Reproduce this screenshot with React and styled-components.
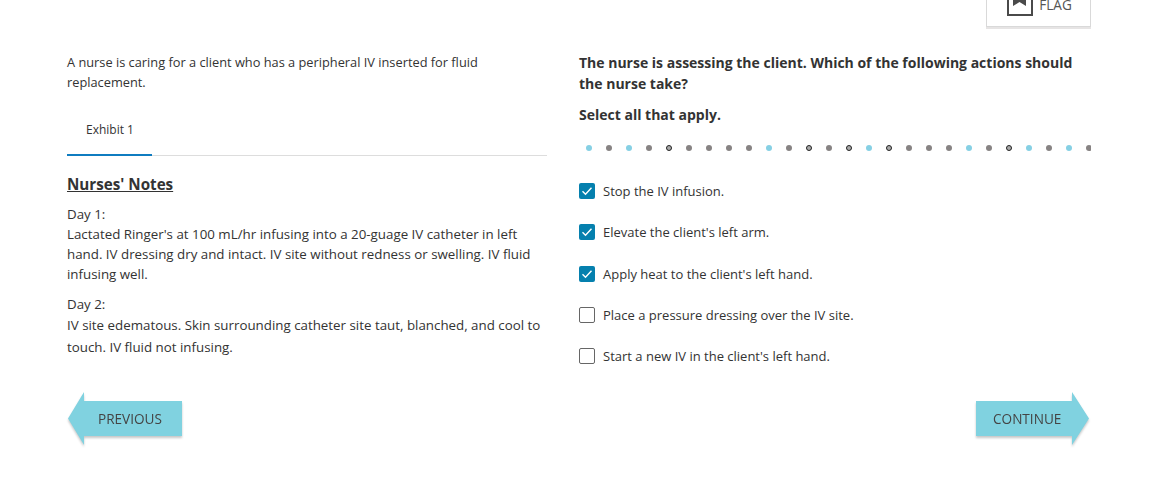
import React from "react";
import styled, { createGlobalStyle } from "styled-components";

const GlobalStyle = createGlobalStyle`
  html, body {
    margin: 0;
    padding: 0;
    background: #fff;
    overflow: hidden;
  }
  body {
    font-family: "Open Sans", "Liberation Sans", sans-serif;
    color: #333;
  }
`;

const Page = styled.div`
  width: 1157px;
  height: 479px;
  overflow: hidden;
`;

const TopBar = styled.div`
  height: 29px;
  padding-right: 66px;
  display: flex;
  justify-content: flex-end;
  align-items: flex-end;
  overflow: hidden;
`;

const FlagButton = styled.div`
  width: 105px;
  height: 40px;
  box-sizing: border-box;
  border: 1px solid #d9d9d9;
  box-shadow: 0 2px 0 #e6e4e4;
  margin-bottom: 2px;
  display: flex;
  align-items: flex-end;
  justify-content: center;
  gap: 6px;
  padding: 0 0 10px 2px;
  color: #555;
  font-size: 13.6px;
  line-height: 14px;
  span {
    margin-bottom: 4px;
  }
`;

const Columns = styled.div`
  display: grid;
  grid-template-columns: 480px 512px;
  column-gap: 32px;
  padding: 0 66px 0 67px;
  margin-top: 14px;
  height: 349px;
`;

const Stem = styled.p`
  margin: 9px 0 0;
  font-size: 12.8px;
  line-height: 20px;
`;

const Tabs = styled.div`
  display: flex;
  height: 46px;
  margin-top: 18px;
  box-sizing: border-box;
  border-bottom: 1px solid #ddd;
`;

const Tab = styled.div`
  width: 85px;
  height: 46px;
  box-sizing: border-box;
  border-bottom: 2px solid #0f7cc0;
  padding: 10px 0 0 19px;
  font-size: 12px;
  line-height: 20px;
`;

const NotesTitle = styled.h2`
  margin: 17px 0 0;
  font-size: 15.2px;
  line-height: 22px;
  font-weight: 700;
  text-decoration: underline;
`;

const Note = styled.p`
  margin: ${(p) => p.$top}px 0 0;
  font-size: 13.33px;
  line-height: ${(p) => p.$leading}px;
`;

const Question = styled.p`
  margin: 9px 0 0;
  font-size: 14px;
  line-height: 21px;
  font-weight: 700;
`;

const Hint = styled.p`
  margin: 10px 0 0;
  font-size: 14px;
  line-height: 21px;
  font-weight: 700;
`;

const DotRow = styled.div`
  display: flex;
  gap: 14px;
  margin: 20px 0 0 7px;
  height: 6px;
  width: 505px;
  overflow: hidden;
`;

const Dot = styled.span`
  flex: none;
  width: 6px;
  height: 6px;
  box-sizing: border-box;
  border-radius: 50%;
  background: ${(p) => (p.$kind === "blue" ? "#86d0e4" : p.$kind === "ring" ? "#a8a8a8" : "#878383")};
  border: ${(p) => (p.$kind === "ring" ? "1px solid #222" : "none")};
`;

const Options = styled.div`
  display: flex;
  flex-direction: column;
  margin-top: 19.7px;
`;

const Option = styled.label`
  display: flex;
  align-items: center;
  gap: 8px;
  height: 41.2px;
  font-size: 13px;
`;

const Box = styled.span`
  flex: none;
  width: 16px;
  height: 16px;
  box-sizing: border-box;
  border-radius: 2px;
  display: flex;
  align-items: center;
  justify-content: center;
  background: ${(p) => (p.$checked ? "#0580ae" : "#fff")};
  border: ${(p) => (p.$checked ? "none" : "1.5px solid #666")};
`;

const NavRow = styled.div`
  display: flex;
  justify-content: space-between;
  padding: 0 68px;
`;

const NavShadow = styled.div`
  filter: drop-shadow(0 2px 1px rgba(0, 0, 0, 0.22));
`;

const NavButton = styled.div`
  width: ${(p) => (p.$back ? "114px" : "113px")};
  height: 53px;
  background: #80d2e0;
  color: #444;
  font-size: 13.6px;
  font-weight: 500;
  display: flex;
  align-items: center;
  box-sizing: border-box;
  clip-path: ${(p) =>
    p.$back
      ? "polygon(0 50%, 16px 0, 16px 9px, 100% 9px, 100% 44px, 16px 44px, 16px 100%)"
      : "polygon(100% 50%, calc(100% - 17px) 0, calc(100% - 17px) 9px, 0 9px, 0 44px, calc(100% - 17px) 44px, calc(100% - 17px) 100%)"};
  padding-left: ${(p) => (p.$back ? "30px" : "17px")};
`;

const dots = "bgbgrggggbgrgrbrgggbgrbgbg".split("");
const kinds = { b: "blue", g: "gray", r: "ring" };

const options = [
  ["Stop the IV infusion.", true],
  ["Elevate the client's left arm.", true],
  ["Apply heat to the client's left hand.", true],
  ["Place a pressure dressing over the IV site.", false],
  ["Start a new IV in the client's left hand.", false],
];

export default function App() {
  return (
    <Page>
      <GlobalStyle />
      <TopBar>
        <FlagButton>
          <svg width="26" height="22" viewBox="0 0 26 22">
            <rect x="1" y="-4" width="24" height="25" fill="none" stroke="#4a4a4a" strokeWidth="2" />
            <path d="M6 0h13v12l-6.5-4-6.5 4z" fill="#4a4a4a" />
          </svg>
          <span>FLAG</span>
        </FlagButton>
      </TopBar>
      <Columns>
        <div>
          <Stem>
            A nurse is caring for a client who has a peripheral IV inserted for fluid replacement.
          </Stem>
          <Tabs>
            <Tab>Exhibit 1</Tab>
          </Tabs>
          <NotesTitle>Nurses' Notes</NotesTitle>
          <Note $top={9} $leading={20}>
            Day 1:
            <br />
            Lactated Ringer's at 100 mL/hr infusing into a 20-guage IV catheter in left hand. IV dressing dry and intact. IV site without redness or swelling. IV fluid infusing well.
          </Note>
          <Note $top={9.6} $leading={21.5}>
            Day 2:
            <br />
            IV site edematous. Skin surrounding catheter site taut, blanched, and cool to touch. IV fluid not infusing.
          </Note>
        </div>
        <div>
          <Question>
            The nurse is assessing the client. Which of the following actions should the nurse take?
          </Question>
          <Hint>Select all that apply.</Hint>
          <DotRow>
            {dots.map((d, i) => (
              <Dot key={i} $kind={kinds[d]} />
            ))}
          </DotRow>
          <Options>
            {options.map(([text, checked]) => (
              <Option key={text}>
                <Box $checked={checked}>
                  {checked && (
                    <svg width="12" height="10" viewBox="0 0 12 10">
                      <path d="M1.5 5.2l3 3 6-6.5" fill="none" stroke="#fff" strokeWidth="1.4" />
                    </svg>
                  )}
                </Box>
                {text}
              </Option>
            ))}
          </Options>
        </div>
      </Columns>
      <NavRow>
        <NavShadow>
          <NavButton $back>PREVIOUS</NavButton>
        </NavShadow>
        <NavShadow>
          <NavButton>CONTINUE</NavButton>
        </NavShadow>
      </NavRow>
    </Page>
  );
}
